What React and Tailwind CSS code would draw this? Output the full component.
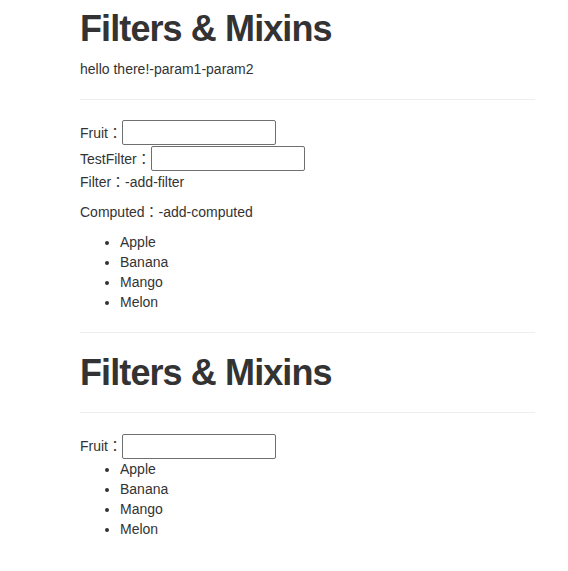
export default function App() {
  const items = ["Apple", "Banana", "Mango", "Melon"];
  const List = ({ cls }) => (
    <ul className={`list-disc pl-[40px] ${cls}`}>
      {items.map((f) => (
        <li key={f} className="leading-[20px]">{f}</li>
      ))}
    </ul>
  );
  const Input = () => (
    <input
      type="text"
      className="w-[154px] h-[25px] border border-[#6f6f6f] rounded-[2px] bg-white align-middle outline-none"
    />
  );
  return (
    <div className="w-[568px] min-h-[571px] bg-white text-[#333] text-[14px] leading-[20px] font-['Liberation_Sans','Noto_Sans_CJK_JP',sans-serif]">
      <div className="ml-[80px] w-[455px] pt-[9px]">
        <h1 className="text-[36px] leading-[39.6px] font-bold tracking-[-0.9px] mb-[10px]">Filters &amp; Mixins</h1>
        <p className="h-[20px]">hello there!-param1-param2</p>
        <hr className="border-0 border-t border-[#eeeeee] mt-[20px] mb-[20px]" />
        <div className="flex items-center h-[26px]">
          <span>Fruit：</span>
          <Input />
        </div>
        <div className="flex items-center h-[26px]">
          <span>TestFilter：</span>
          <Input />
        </div>
        <div>Filter：-add-filter</div>
        <p className="mt-[10px] mb-[10px]">Computed：-add-computed</p>
        <List cls="mb-[10px]" />
        <hr className="border-0 border-t border-[#eeeeee] mt-[20px] mb-[20px]" />
        <h1 className="text-[36px] leading-[39.6px] font-bold tracking-[-0.9px]">Filters &amp; Mixins</h1>
        <hr className="border-0 border-t border-[#eeeeee] mt-[20px] mb-[20px]" />
        <div className="flex items-center h-[26px]">
          <span>Fruit：</span>
          <Input />
        </div>
        <List cls="" />
      </div>
    </div>
  );
}
